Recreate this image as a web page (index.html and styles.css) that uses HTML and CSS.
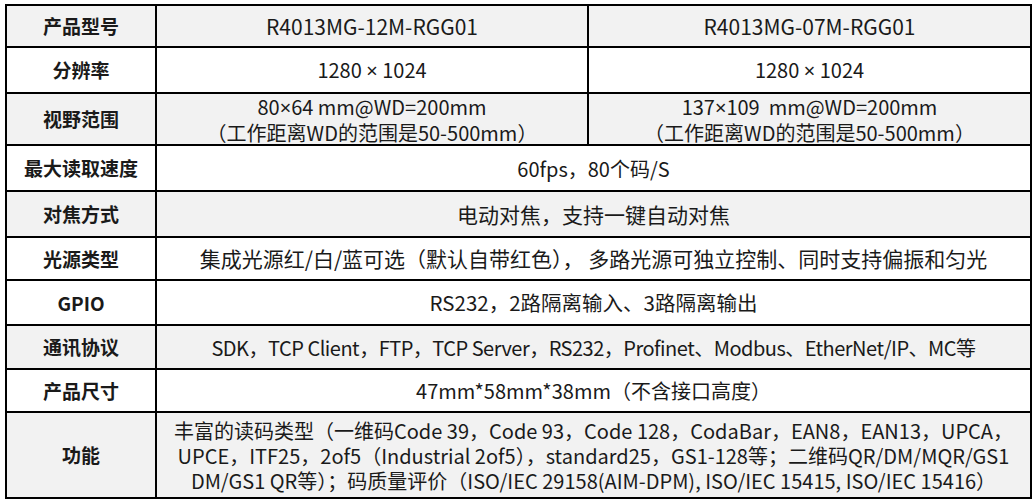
FILE: index.html
```html
<!DOCTYPE html>
<html lang="zh-CN">
<head>
<meta charset="utf-8">
<title>产品规格</title>
<link rel="stylesheet" href="styles.css">
</head>
<body>
<div class="spec">
  <div class="lbl r1 gray">产品型号</div>
  <div class="val big gray">R4013MG-12M-RGG01</div>
  <div class="val big gray">R4013MG-07M-RGG01</div>

  <div class="lbl">分辨率</div>
  <div class="val"><p class="t">1280 <span class="x">×</span> 1024</p></div>
  <div class="val"><p class="t">1280 <span class="x">×</span> 1024</p></div>

  <div class="lbl gray">视野范围</div>
  <div class="val gray"><p class="t">80<span class="x">×</span>64 mm@WD=200mm<br>（工作距离WD的范围是50-500mm）</p></div>
  <div class="val gray"><p class="t">137<span class="x">×</span>109&nbsp; mm@WD=200mm<br>（工作距离WD的范围是50-500mm）</p></div>

  <div class="lbl">最大读取速度</div>
  <div class="val wide">60fps，80个码/S</div>

  <div class="lbl gray">对焦方式</div>
  <div class="val big gray wide">电动对焦，支持一键自动对焦</div>

  <div class="lbl">光源类型</div>
  <div class="val big wide">集成光源红/白/蓝可选（默认自带红色），&nbsp;多路光源可独立控制、同时支持偏振和匀光</div>

  <div class="lbl">GPIO</div>
  <div class="val mid wide">RS232，2路隔离输入、3路隔离输出</div>

  <div class="lbl gray">通讯协议</div>
  <div class="val tight gray wide">SDK，TCP Client，FTP，TCP Server，RS232，Profinet、Modbus、EtherNet/IP、MC等</div>

  <div class="lbl">产品尺寸</div>
  <div class="val wide">47mm*58mm*38mm（不含接口高度）</div>

  <div class="lbl gray">功能</div>
  <div class="val gray wide"><p class="t">丰富的读码类型（一维码Code 39，Code 93，Code 128，CodaBar，EAN8，EAN13，UPCA，<br>UPCE，ITF25，2of5（Industrial 2of5），standard25，GS1-128等；二维码QR/DM/MQR/GS1<br>DM/GS1 QR等）；码质量评价（ISO/IEC 29158(AIM-DPM), ISO/IEC 15415, ISO/IEC 15416）</p></div>
</div>
</body>
</html>
```

FILE: styles.css
```css
html, body {
  margin: 0;
  padding: 0;
  background: #ffffff;
}

body {
  padding: 4px 0 0 5px;
  font-family: "Noto Sans CJK SC", "Noto Sans", sans-serif;
  color: #1a1a1a;
}

.spec {
  display: grid;
  width: 1027px;
  box-sizing: border-box;
  grid-template-columns: 148px 430px 441px;
  grid-template-rows: 40px 44px 50px 44px 44px 41px 43px 42px 41px 84px;
  gap: 2px;
  padding: 2px;
  background: #000000;
}

.lbl,
.val {
  display: flex;
  align-items: center;
  justify-content: center;
  text-align: center;
  background: #ffffff;
  white-space: nowrap;
}

.t {
  margin: 0;
}

.lbl {
  font-size: 19px;
  font-weight: 700;
  line-height: 24px;
}

.val {
  font-size: 20px;
  font-weight: 400;
  line-height: 25px;
}

.val.big {
  font-size: 21px;
}

.val.mid {
  font-size: 20.5px;
}

.val.tight {
  letter-spacing: -0.5px;
}

.x {
  font-family: "Noto Sans", sans-serif;
}

.gray {
  background: #f2f2f2;
}

.wide {
  grid-column: span 2;
}
```
